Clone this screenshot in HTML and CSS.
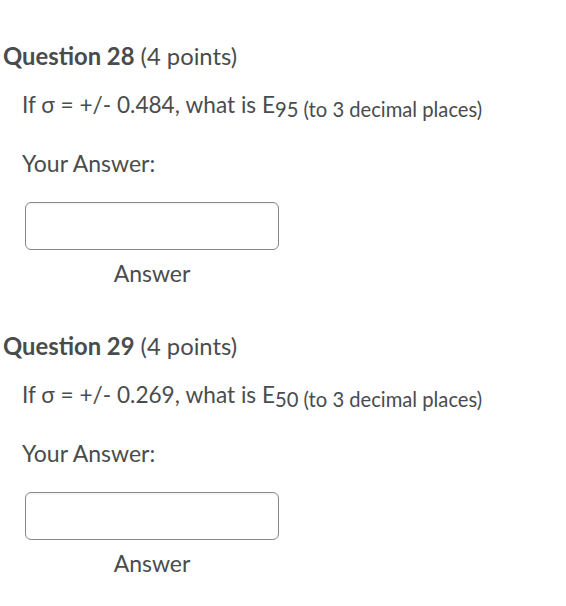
FILE: index.html
```html
<!DOCTYPE html>
<html>
<head>
<meta charset="utf-8">
<link rel="stylesheet" href="styles.css">
</head>
<body>
<div class="page">
  <section class="question">
    <h2 class="q-title"><strong>Question 28</strong> (4 points)</h2>
    <p class="q-text">If σ = +/- 0.484, what is E<sub class="sub">95 (to 3 decimal places)</sub></p>
    <p class="q-label">Your Answer:</p>
    <div class="answer">
      <input class="answer-input" type="text" aria-label="Answer">
      <div class="answer-caption">Answer</div>
    </div>
  </section>
  <section class="question">
    <h2 class="q-title"><strong>Question 29</strong> (4 points)</h2>
    <p class="q-text">If σ = +/- 0.269, what is E<sub class="sub">50 (to 3 decimal places)</sub></p>
    <p class="q-label">Your Answer:</p>
    <div class="answer">
      <input class="answer-input" type="text" aria-label="Answer">
      <div class="answer-caption">Answer</div>
    </div>
  </section>
</div>
</body>
</html>
```
FILE: styles.css
```css
html, body {
  margin: 0;
  padding: 0;
  background: #ffffff;
}
body {
  font-family: Lato, "Open Sans", sans-serif;
  color: #494c4e;
}
.page {
  padding-top: 42px;
}
.question {
  height: 290px;
  display: flex;
  flex-direction: column;
}
.q-title {
  margin: 0 0 0 3px;
  font-size: 23.8px;
  font-weight: 400;
  line-height: 29px;
}
.q-title strong {
  font-weight: 700;
}
.q-text {
  margin: 20px 0 0 22px;
  font-size: 22.6px;
  line-height: 28px;
}
.sub {
  font-size: 20.2px;
  vertical-align: -4px;
  line-height: 0;
}
.q-label {
  margin: 30px 0 0 22px;
  font-size: 23px;
  line-height: 28px;
}
.answer {
  margin: 25px 0 0 25px;
  width: 254px;
  display: flex;
  flex-direction: column;
}
.answer-input {
  box-sizing: border-box;
  width: 254px;
  height: 48px;
  margin: 0;
  border: 1px solid #868686;
  border-radius: 6px;
  background: #fff;
  box-shadow: inset 0 2px 0 0 #f7f7f8;
  font: inherit;
  padding: 0 10px;
}
.answer-caption {
  margin-top: 9px;
  text-align: center;
  font-size: 23px;
  line-height: 28px;
}
```
